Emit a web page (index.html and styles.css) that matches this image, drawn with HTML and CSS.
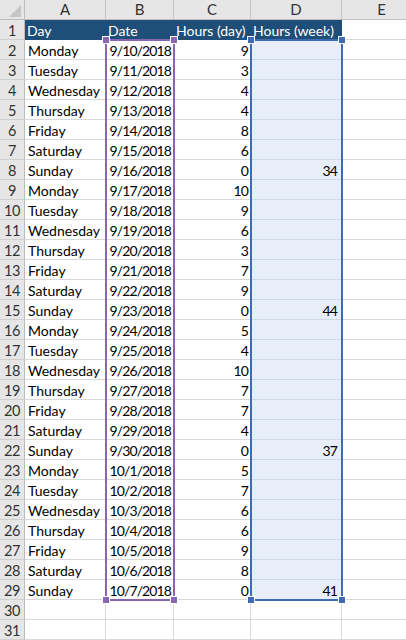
FILE: index.html
```html
<!DOCTYPE html>
<html>
<head>
<meta charset="utf-8">
<link rel="stylesheet" href="styles.css">
</head>
<body>
<div class="sheet">
  <div class="grid">
    <div class="corner"><svg width="25" height="20" viewBox="0 0 25 20"><polygon points="21,5 21,17 9,17" fill="#c6c6c6"/></svg></div>
    <div class="ch">A</div><div class="ch">B</div><div class="ch">C</div><div class="ch">D</div><div class="ch">E</div>

    <div class="rh">1</div><div class="c t">Day</div><div class="c t">Date</div><div class="c t">Hours (day)</div><div class="c t">Hours (week)</div><div class="c"></div>
    <div class="rh">2</div><div class="c">Monday</div><div class="c n">9/10/2018</div><div class="c n">9</div><div class="c n d"></div><div class="c"></div>
    <div class="rh">3</div><div class="c">Tuesday</div><div class="c n">9/11/2018</div><div class="c n">3</div><div class="c n d"></div><div class="c"></div>
    <div class="rh">4</div><div class="c">Wednesday</div><div class="c n">9/12/2018</div><div class="c n">4</div><div class="c n d"></div><div class="c"></div>
    <div class="rh">5</div><div class="c">Thursday</div><div class="c n">9/13/2018</div><div class="c n">4</div><div class="c n d"></div><div class="c"></div>
    <div class="rh">6</div><div class="c">Friday</div><div class="c n">9/14/2018</div><div class="c n">8</div><div class="c n d"></div><div class="c"></div>
    <div class="rh">7</div><div class="c">Saturday</div><div class="c n">9/15/2018</div><div class="c n">6</div><div class="c n d"></div><div class="c"></div>
    <div class="rh">8</div><div class="c">Sunday</div><div class="c n">9/16/2018</div><div class="c n">0</div><div class="c n d">34</div><div class="c"></div>
    <div class="rh">9</div><div class="c">Monday</div><div class="c n">9/17/2018</div><div class="c n">10</div><div class="c n d"></div><div class="c"></div>
    <div class="rh">10</div><div class="c">Tuesday</div><div class="c n">9/18/2018</div><div class="c n">9</div><div class="c n d"></div><div class="c"></div>
    <div class="rh">11</div><div class="c">Wednesday</div><div class="c n">9/19/2018</div><div class="c n">6</div><div class="c n d"></div><div class="c"></div>
    <div class="rh">12</div><div class="c">Thursday</div><div class="c n">9/20/2018</div><div class="c n">3</div><div class="c n d"></div><div class="c"></div>
    <div class="rh">13</div><div class="c">Friday</div><div class="c n">9/21/2018</div><div class="c n">7</div><div class="c n d"></div><div class="c"></div>
    <div class="rh">14</div><div class="c">Saturday</div><div class="c n">9/22/2018</div><div class="c n">9</div><div class="c n d"></div><div class="c"></div>
    <div class="rh">15</div><div class="c">Sunday</div><div class="c n">9/23/2018</div><div class="c n">0</div><div class="c n d">44</div><div class="c"></div>
    <div class="rh">16</div><div class="c">Monday</div><div class="c n">9/24/2018</div><div class="c n">5</div><div class="c n d"></div><div class="c"></div>
    <div class="rh">17</div><div class="c">Tuesday</div><div class="c n">9/25/2018</div><div class="c n">4</div><div class="c n d"></div><div class="c"></div>
    <div class="rh">18</div><div class="c">Wednesday</div><div class="c n">9/26/2018</div><div class="c n">10</div><div class="c n d"></div><div class="c"></div>
    <div class="rh">19</div><div class="c">Thursday</div><div class="c n">9/27/2018</div><div class="c n">7</div><div class="c n d"></div><div class="c"></div>
    <div class="rh">20</div><div class="c">Friday</div><div class="c n">9/28/2018</div><div class="c n">7</div><div class="c n d"></div><div class="c"></div>
    <div class="rh">21</div><div class="c">Saturday</div><div class="c n">9/29/2018</div><div class="c n">4</div><div class="c n d"></div><div class="c"></div>
    <div class="rh">22</div><div class="c">Sunday</div><div class="c n">9/30/2018</div><div class="c n">0</div><div class="c n d">37</div><div class="c"></div>
    <div class="rh">23</div><div class="c">Monday</div><div class="c n">10/1/2018</div><div class="c n">5</div><div class="c n d"></div><div class="c"></div>
    <div class="rh">24</div><div class="c">Tuesday</div><div class="c n">10/2/2018</div><div class="c n">7</div><div class="c n d"></div><div class="c"></div>
    <div class="rh">25</div><div class="c">Wednesday</div><div class="c n">10/3/2018</div><div class="c n">6</div><div class="c n d"></div><div class="c"></div>
    <div class="rh">26</div><div class="c">Thursday</div><div class="c n">10/4/2018</div><div class="c n">6</div><div class="c n d"></div><div class="c"></div>
    <div class="rh">27</div><div class="c">Friday</div><div class="c n">10/5/2018</div><div class="c n">9</div><div class="c n d"></div><div class="c"></div>
    <div class="rh">28</div><div class="c">Saturday</div><div class="c n">10/6/2018</div><div class="c n">8</div><div class="c n d"></div><div class="c"></div>
    <div class="rh">29</div><div class="c">Sunday</div><div class="c n">10/7/2018</div><div class="c n">0</div><div class="c n d">41</div><div class="c"></div>
    <div class="rh">30</div><div class="c"></div><div class="c"></div><div class="c"></div><div class="c"></div><div class="c"></div>
    <div class="rh">31</div><div class="c"></div><div class="c"></div><div class="c"></div><div class="c"></div><div class="c"></div>
  </div>

  <div class="sel sel-ref">
    <span class="h tl"></span><span class="h tr"></span><span class="h bl"></span><span class="h br"></span>
  </div>
  <div class="sel sel-main">
    <span class="h tl"></span><span class="h tr"></span><span class="h bl"></span><span class="h br"></span>
  </div>
</div>
</body>
</html>
```

FILE: styles.css
```css
html, body {
  margin: 0;
  padding: 0;
  background: #ffffff;
  overflow: hidden;
}

.sheet {
  position: relative;
  width: 406px;
  height: 640px;
  overflow: hidden;
  font-family: Lato, "Open Sans", "Liberation Sans", sans-serif;
  font-size: 14px;
  color: #000;
}

.grid {
  display: grid;
  grid-template-columns: 25px 81px 68px 77px 91px 80px;
  grid-auto-rows: 20px;
}

.grid > div {
  box-sizing: border-box;
  height: 20px;
  line-height: 21px;
  white-space: nowrap;
  overflow: visible;
}

.corner {
  background: #e6e6e6;
  border-right: 1px solid #bcbcbc;
  border-bottom: 1px solid #bcbcbc;
}
.corner svg { display: block; }

.ch {
  background: #e6e6e6;
  color: #333;
  text-align: center;
  font-size: 15px;
  border-right: 1px solid #c4c4c4;
  border-bottom: 1px solid #bcbcbc;
}
.grid > .ch { line-height: 19px; }

.rh {
  background: #e6e6e6;
  color: #333;
  text-align: center;
  font-size: 14.5px;
  letter-spacing: -0.3px;
  border-right: 1px solid #bcbcbc;
  border-bottom: 1px solid #d0d0d0;
}

.c {
  border-right: 1px solid #d9d9d9;
  border-bottom: 1px solid #d9d9d9;
  padding: 0 3px;
  position: relative;
}

.n {
  text-align: right;
  letter-spacing: -0.9px;
  padding-right: 2px;
}

.t {
  background: #1f4e78;
  color: #ffffff;
  border-right-color: #1f4e78;
  border-bottom-color: #1f4e78;
  padding-left: 2px;
}

.d {
  background: #e8eef8;
  border-bottom-color: #d2d9e6;
  padding-right: 4px;
}

.sel {
  position: absolute;
  box-sizing: border-box;
  border: 2px solid;
}

.sel-ref {
  left: 105px;
  top: 39px;
  width: 70px;
  height: 562px;
  border-color: #8767b4;
}

.sel-main {
  left: 250px;
  top: 39px;
  width: 93px;
  height: 562px;
  border-color: #3d6cb5;
}

.h {
  position: absolute;
  box-sizing: border-box;
  width: 8px;
  height: 8px;
  border: 1px solid #ffffff;
}
.sel-ref .h { background: #8767b4; }
.sel-main .h { background: #3d6cb5; }

.tl { left: -5px; top: -5px; }
.tr { right: -5px; top: -5px; }
.bl { left: -5px; bottom: -5px; }
.br { right: -5px; bottom: -5px; }
```
